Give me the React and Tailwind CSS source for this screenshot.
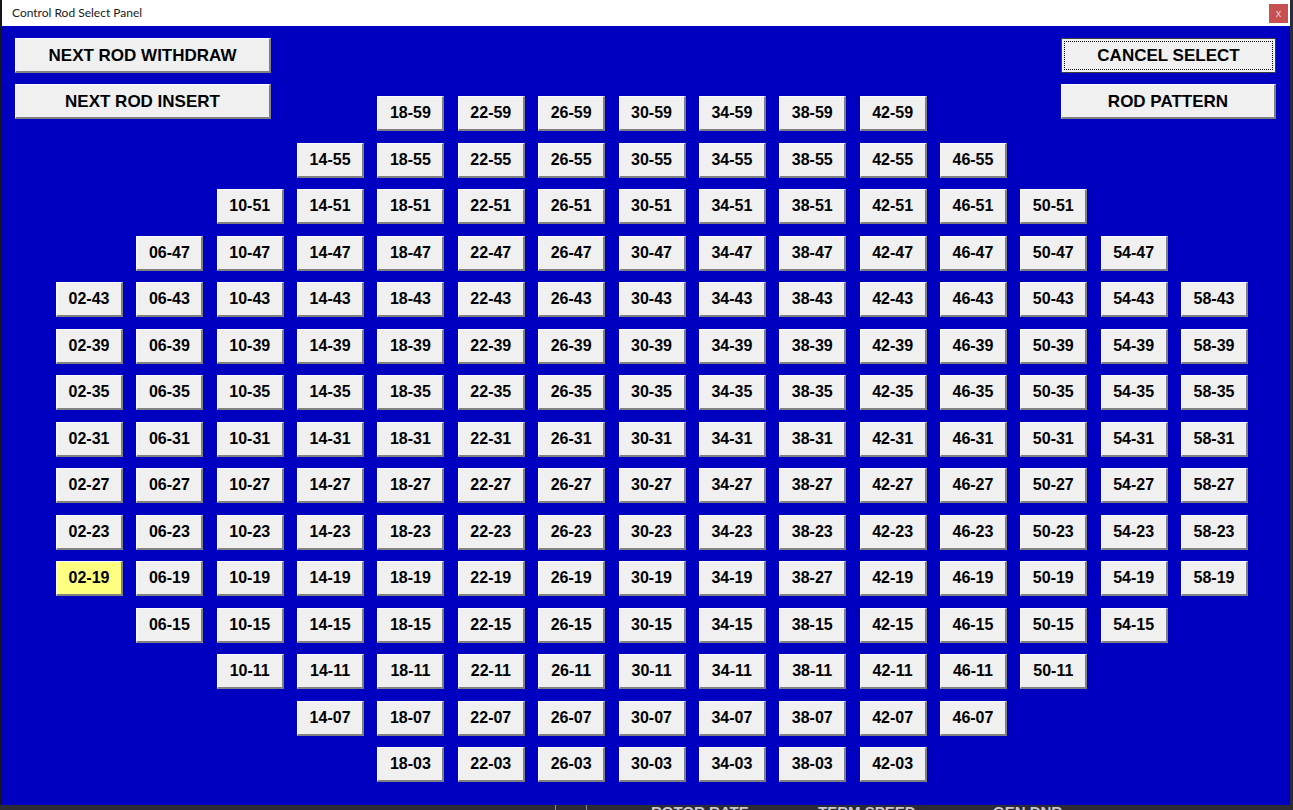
import React from "react";

// Core map: rows from top (59) to bottom (03), columns 02..58 in steps of 4.
const COLS = [2, 6, 10, 14, 18, 22, 26, 30, 34, 38, 42, 46, 50, 54, 58];
const ROWS = [59, 55, 51, 47, 43, 39, 35, 31, 27, 23, 19, 15, 11, 7, 3];
const SPAN = {
  59: [18, 42],
  55: [14, 46],
  51: [10, 50],
  47: [6, 54],
  15: [6, 54],
  11: [10, 50],
  7: [14, 46],
  3: [18, 42],
};
const pad = (n) => String(n).padStart(2, "0");
const labelFor = (x, y) => (x === 38 && y === 19 ? "38-27" : `${pad(x)}-${pad(y)}`);

const rodBtn =
  "h-[35px] flex items-center justify-center text-[16px] font-bold text-black leading-none border-t border-l border-r-2 border-b-2 border-t-[#fbfbfb] border-l-[#fbfbfb] border-r-[#808080] border-b-[#808080]";

function RodButton({ x, y }) {
  const selected = x === 2 && y === 19;
  return (
    <div className={`${rodBtn} ${selected ? "bg-[#ffff80]" : "bg-[#f0f0f0]"}`}>
      {labelFor(x, y)}
    </div>
  );
}

function RodGrid() {
  const cells = [];
  ROWS.forEach((y) => {
    const [lo, hi] = SPAN[y] || [2, 58];
    COLS.forEach((x) => {
      const key = `${x}-${y}`;
      if (x >= lo && x <= hi) cells.push(<RodButton key={key} x={x} y={y} />);
      else cells.push(<div key={key} />);
    });
  });
  return (
    <div className="grid grid-cols-[repeat(15,67px)] grid-rows-[repeat(15,35px)] gap-x-[13.36px] gap-y-[11.5px]">
      {cells}
    </div>
  );
}

const cmdBtn =
  "h-[35px] flex items-center justify-center text-[17px] font-bold text-black leading-none bg-[#f0f0f0] border-t border-l border-r-2 border-b-2 border-t-[#fbfbfb] border-l-[#fbfbfb] border-r-[#808080] border-b-[#808080]";

function CommandButtons() {
  return (
    <div className="[grid-area:1/1] flex justify-between items-start pl-[13px] pr-[14px] pt-[12px] pointer-events-none">
      <div className="flex flex-col gap-[11px] w-[256px] pointer-events-auto">
        <div className={cmdBtn}>NEXT ROD WITHDRAW</div>
        <div className={cmdBtn}>NEXT ROD INSERT</div>
      </div>
      <div className="flex flex-col gap-[11px] w-[215px] pointer-events-auto">
        <div className="h-[35px] bg-[#f0f0f0] border border-[#3c3c3c] p-[2px]">
          <div className="h-full flex items-center justify-center text-[17px] font-bold text-black leading-none border border-dotted border-black">
            CANCEL SELECT
          </div>
        </div>
        <div className={cmdBtn}>ROD PATTERN</div>
      </div>
    </div>
  );
}

export default function App() {
  return (
    <div className="w-[1293px] h-[810px] flex flex-col overflow-hidden bg-[#1e1e26] font-['Liberation_Sans',Arial,sans-serif]">
      <div className="flex flex-1 min-h-0">
        <div className="w-[2px] bg-[#15151a]" />
        <div className="flex-1 flex flex-col">
          {/* title bar */}
          <div className="h-[26px] bg-white flex items-center justify-between pl-[10px] pr-[2px]">
            <span className="text-[12px] text-[#1a1a1a] font-['Lato','Noto_Sans',sans-serif]">
              Control Rod Select Panel
            </span>
            <div className="w-[19px] h-[19px] bg-[#c75050] flex items-center justify-center text-[11px] leading-none text-[#f3d0d0] font-['Liberation_Sans',Arial,sans-serif]">
              x
            </div>
          </div>
          {/* panel body */}
          <div className="flex-1 bg-[#0000c0] grid">
            <div className="[grid-area:1/1] pl-[54px] pt-[70px]">
              <RodGrid />
            </div>
            <CommandButtons />
          </div>
        </div>
        <div className="w-[3px] bg-[#2a2a38]" />
      </div>
      {/* strip of the window below */}
      <div className="h-[5px] bg-[#2b2b36] relative overflow-hidden">
        <div className="absolute left-[555px] top-0 w-px h-full bg-[#8a8a9a]" />
        <div className="absolute left-[586px] top-0 w-px h-full bg-[#8a8a9a]" />
        <span className="absolute left-[651px] top-[-1px] text-[15px] font-bold text-[#c8c8d0] leading-none">ROTOR RATE</span>
        <span className="absolute left-[818px] top-[-1px] text-[15px] font-bold text-[#c8c8d0] leading-none">TERM SPEED</span>
        <span className="absolute left-[993px] top-[-1px] text-[15px] font-bold text-[#c8c8d0] leading-none">GEN DNR</span>
      </div>
    </div>
  );
}
